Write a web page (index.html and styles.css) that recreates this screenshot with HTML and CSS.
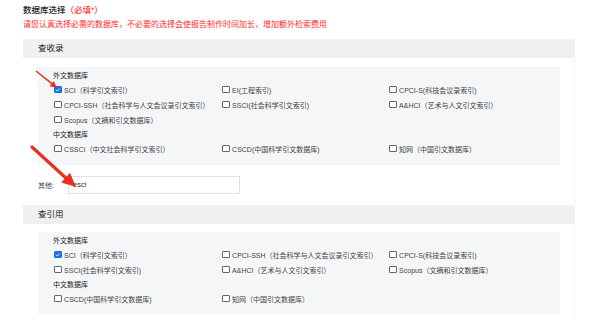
FILE: index.html
```html
<!DOCTYPE html>
<html lang="zh">
<head>
<meta charset="utf-8">
<title>数据库选择</title>
<link rel="stylesheet" href="styles.css">
</head>
<body>
<div class="page">
  <div class="title">数据库选择<span class="req">（必填*）</span></div>
  <div class="notice">请您认真选择必需的数据库，不必要的选择会使报告制作时间加长，增加额外检索费用</div>

  <div class="panel">
    <div class="panel-head">查收录</div>
    <div class="panel-body">
      <div class="box">
        <div class="group-label">外文数据库</div>
        <div class="grid">
          <label class="opt"><span class="cb checked"><svg viewBox="0 0 8 8"><path d="M1.6 4.1 L3.3 5.8 L6.5 2.3" fill="none" stroke="#fff" stroke-width="1.3"/></svg></span>SCI（科学引文索引）</label>
          <label class="opt"><span class="cb"></span>EI(工程索引)</label>
          <label class="opt"><span class="cb"></span>CPCI-S(科技会议录索引)</label>
          <label class="opt"><span class="cb"></span>CPCI-SSH（社会科学与人文会议录引文索引）</label>
          <label class="opt"><span class="cb"></span>SSCI(社会科学引文索引)</label>
          <label class="opt"><span class="cb"></span>A&amp;HCI（艺术与人文引文索引）</label>
          <label class="opt"><span class="cb"></span>Scopus（文摘和引文数据库）</label>
        </div>
        <div class="group-label next">中文数据库</div>
        <div class="grid">
          <label class="opt"><span class="cb"></span>CSSCI（中文社会科学引文索引）</label>
          <label class="opt"><span class="cb"></span>CSCD(中国科学引文数据库)</label>
          <label class="opt"><span class="cb"></span>知网（中国引文数据库）</label>
        </div>
      </div>
      <div class="other">
        <span class="other-label">其他:</span>
        <div class="input">esci</div>
      </div>
    </div>

    <div class="panel-head">查引用</div>
    <div class="panel-body last">
      <div class="box">
        <div class="group-label">外文数据库</div>
        <div class="grid">
          <label class="opt"><span class="cb checked"><svg viewBox="0 0 8 8"><path d="M1.6 4.1 L3.3 5.8 L6.5 2.3" fill="none" stroke="#fff" stroke-width="1.3"/></svg></span>SCI（科学引文索引）</label>
          <label class="opt"><span class="cb"></span>CPCI-SSH（社会科学与人文会议录引文索引）</label>
          <label class="opt"><span class="cb"></span>CPCI-S(科技会议录索引)</label>
          <label class="opt"><span class="cb"></span>SSCI(社会科学引文索引)</label>
          <label class="opt"><span class="cb"></span>A&amp;HCI（艺术与人文引文索引）</label>
          <label class="opt"><span class="cb"></span>Scopus（文摘和引文数据库）</label>
        </div>
        <div class="group-label next">中文数据库</div>
        <div class="grid">
          <label class="opt"><span class="cb"></span>CSCD(中国科学引文数据库)</label>
          <label class="opt"><span class="cb"></span>知网（中国引文数据库）</label>
        </div>
      </div>
    </div>
  </div>
</div>

<svg class="arrows" width="600" height="320" viewBox="0 0 600 320">
  <line x1="36" y1="71" x2="52.5" y2="84.2" stroke="#e8321e" stroke-width="1.6"/>
  <polygon points="57,88 49.5,86.2 53.8,80.9" fill="#e8321e"/>
  <line x1="32" y1="147" x2="67" y2="179" stroke="#e8321e" stroke-width="3.2" stroke-linecap="round"/>
  <polygon points="76,187 61.2,182.4 70,172.8" fill="#e8321e"/>
</svg>
</body>
</html>
```
FILE: styles.css
```css
html, body {
  margin: 0;
  padding: 0;
  background: #fff;
}
body {
  font-family: "Liberation Sans", "Noto Sans CJK SC", sans-serif;
  color: #333;
  position: relative;
  width: 600px;
  height: 320px;
  overflow: hidden;
}
.page {
  padding: 4px 0 0 23px;
}
.title {
  font-size: 8.5px;
  line-height: 12px;
  height: 12px;
  color: #222;
  font-weight: 500;
}
.req {
  color: #ff3b30;
}
.notice {
  margin-top: 3px;
  font-size: 8px;
  line-height: 12px;
  color: #ff2d2d;
  white-space: nowrap;
}
.panel {
  margin-top: 8px;
  width: 552px;
  box-sizing: border-box;
  border-right: 1px solid #f2f2f2;
}
.panel-head {
  background: #f0f0f0;
  height: 19px;
  line-height: 19px;
  padding-left: 15px;
  font-size: 8.5px;
  color: #222;
}
.panel-body {
  padding: 9px 14px 11px 15px;
}
.panel-body.last {
  padding: 8px 14px 10px 15px;
}
.box {
  background: #f5f6f8;
  padding: 3px 0 9px 15px;
}
.panel-body.last .box {
  padding-bottom: 8px;
}
.group-label {
  font-size: 7px;
  line-height: 12px;
  height: 12px;
  color: #222;
}
.group-label.next {
  margin-top: 2px;
}
.grid {
  display: grid;
  grid-template-columns: 168px 167px 160px;
}
.opt {
  display: flex;
  align-items: center;
  height: 15px;
  font-size: 7px;
  color: #444;
  white-space: nowrap;
}
.cb {
  width: 5.6px;
  height: 5.6px;
  border: 0.8px solid #666;
  border-radius: 1px;
  margin: 0 2.5px 0 1px;
  background: #fff;
  flex: none;
  display: flex;
}
.cb.checked {
  background: #1a73e8;
  border-color: #1a73e8;
}
.cb svg {
  width: 100%;
  height: 100%;
}
.other {
  display: flex;
  align-items: center;
  margin-top: 11px;
  height: 18px;
}
.other-label {
  font-size: 7px;
  color: #444;
  width: 30px;
}
.input {
  width: 172px;
  height: 18px;
  box-sizing: border-box;
  border: 1px solid #e2e2e2;
  font-size: 7.5px;
  line-height: 16px;
  padding-left: 4px;
  color: #333;
}
.arrows {
  position: absolute;
  left: 0;
  top: 0;
  pointer-events: none;
}
```
